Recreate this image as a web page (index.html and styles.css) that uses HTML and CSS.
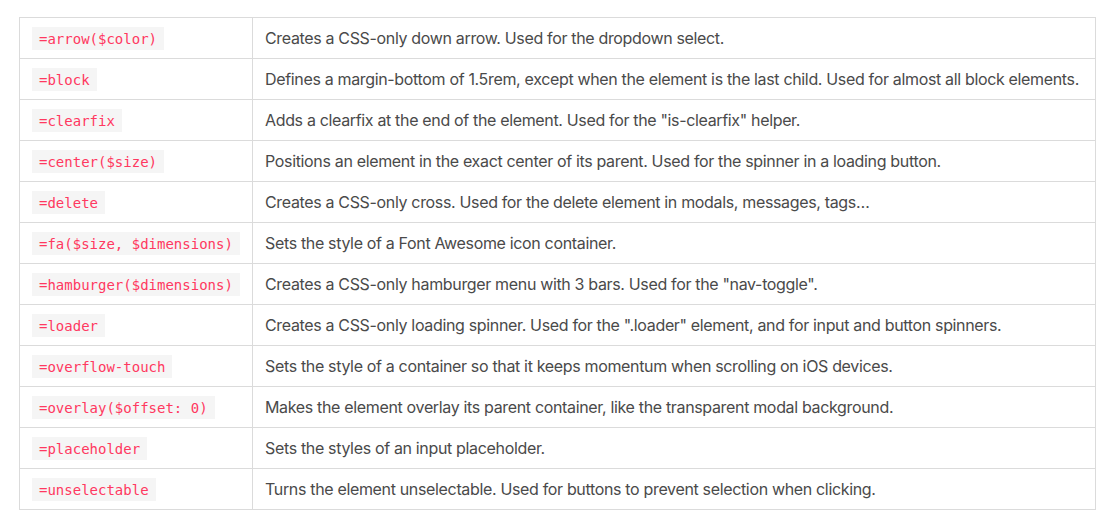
FILE: index.html
```html
<!DOCTYPE html>
<html>
<head>
<meta charset="utf-8">
<link rel="stylesheet" href="styles.css">
</head>
<body>
<div class="wrap">
<table class="table">
<tbody>
<tr><td class="name"><code>=arrow($color)</code></td><td>Creates a CSS-only down arrow. Used for the dropdown select.</td></tr>
<tr><td class="name"><code>=block</code></td><td>Defines a margin-bottom of 1.5rem, except when the element is the last child. Used for almost all block elements.</td></tr>
<tr><td class="name"><code>=clearfix</code></td><td>Adds a clearfix at the end of the element. Used for the "is-clearfix" helper.</td></tr>
<tr><td class="name"><code>=center($size)</code></td><td>Positions an element in the exact center of its parent. Used for the spinner in a loading button.</td></tr>
<tr><td class="name"><code>=delete</code></td><td>Creates a CSS-only cross. Used for the delete element in modals, messages, tags…</td></tr>
<tr><td class="name"><code>=fa($size, $dimensions)</code></td><td>Sets the style of a Font Awesome icon container.</td></tr>
<tr><td class="name"><code>=hamburger($dimensions)</code></td><td>Creates a CSS-only hamburger menu with 3 bars. Used for the "nav-toggle".</td></tr>
<tr><td class="name"><code>=loader</code></td><td>Creates a CSS-only loading spinner. Used for the ".loader" element, and for input and button spinners.</td></tr>
<tr><td class="name"><code>=overflow-touch</code></td><td>Sets the style of a container so that it keeps momentum when scrolling on iOS devices.</td></tr>
<tr><td class="name"><code>=overlay($offset: 0)</code></td><td>Makes the element overlay its parent container, like the transparent modal background.</td></tr>
<tr><td class="name"><code>=placeholder</code></td><td>Sets the styles of an input placeholder.</td></tr>
<tr><td class="name"><code>=unselectable</code></td><td>Turns the element unselectable. Used for buttons to prevent selection when clicking.</td></tr>
</tbody>
</table>
</div>
</body>
</html>
```
FILE: styles.css
```css
html, body {
  margin: 0;
  padding: 0;
  background: #fff;
}
body {
  font-family: Inter, "Noto Sans", sans-serif;
  font-size: 16px;
  line-height: 24px;
  color: #4a4a4a;
}
.wrap {
  padding: 17px 17px 0 19px;
}
.table {
  width: 100%;
  border-collapse: collapse;
  border-spacing: 0;
}
.table td {
  border: 1px solid #dbdbdb;
  padding: 8px 12px;
  vertical-align: top;
  text-align: left;
  white-space: nowrap;
  letter-spacing: -0.34px;
}
.table td.name {
  width: 208px;
  letter-spacing: 0;
}
code {
  font-family: "DejaVu Sans Mono", monospace;
  font-size: 14px;
  line-height: normal;
  background: #f5f5f5;
  color: #ff3860;
  padding: 3.5px 7px;
  vertical-align: 1px;
}
```
